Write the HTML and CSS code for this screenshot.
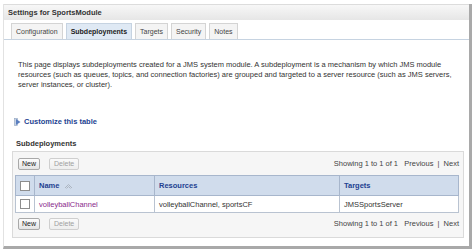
FILE: index.html
```html
<!DOCTYPE html>
<html lang="en">
<head>
  <meta charset="UTF-8" />
  <title>Settings for SportsModule</title>
  <link rel="stylesheet" href="styles.css">
</head>
<body>
  <div class="panel">
    <div class="title">Settings for SportsModule</div>

    <!-- Tabs -->
    <div class="tabs">
      <span class="tab">Configuration</span>
      <span class="tab active">Subdeployments</span>
      <span class="tab">Targets</span>
      <span class="tab">Security</span>
      <span class="tab">Notes</span>
    </div>

    <div class="content">
      <p class="intro">This page displays subdeployments created for a JMS system module. A subdeployment is a mechanism by which JMS module resources (such as queues, topics, and connection factories) are grouped and targeted to a server resource (such as JMS servers, server instances, or cluster).</p>

      <a class="customize" href="#">
        <svg width="7" height="8" viewBox="0 0 7 8"><rect x="0.5" y="0.5" width="3" height="7" fill="#c8d3e3" stroke="#8fa3c0" stroke-width="0.6"/><path d="M2 1 L6.5 4 L2 7 Z" fill="#5b7fc0"/></svg>
        Customize this table
      </a>

      <h4 class="section">Subdeployments</h4>

      <div class="table-box">
        <div class="toolbar">
          <div class="buttons">
            <button class="btn">New</button>
            <button class="btn disabled">Delete</button>
          </div>
          <div class="pager">Showing 1 to 1 of 1 &nbsp; Previous <span class="sep">|</span> Next</div>
        </div>

        <table class="grid">
          <thead>
            <tr>
              <th class="check"><span class="box"></span></th>
              <th class="name">Name
                <svg width="9" height="6" viewBox="0 0 9 6"><path d="M1 5 L4.5 1.5 L8 5" fill="none" stroke="#a8b0bc" stroke-width="0.9"/><path d="M2.5 5.5 L4.5 3.5 L6.5 5.5" fill="none" stroke="#a8b0bc" stroke-width="0.9"/></svg>
              </th>
              <th class="res">Resources</th>
              <th>Targets</th>
            </tr>
          </thead>
          <tbody>
            <tr>
              <td class="check"><span class="box"></span></td>
              <td><a class="link" href="#">volleyballChannel</a></td>
              <td>volleyballChannel, sportsCF</td>
              <td>JMSSportsServer</td>
            </tr>
          </tbody>
        </table>

        <div class="toolbar bottom">
          <div class="buttons">
            <button class="btn">New</button>
            <button class="btn disabled">Delete</button>
          </div>
          <div class="pager">Showing 1 to 1 of 1 &nbsp; Previous <span class="sep">|</span> Next</div>
        </div>
      </div>
    </div>
  </div>
</body>
</html>
```

FILE: styles.css
```css
body { margin: 0; background: #fff; font-family: 'Liberation Sans', Arial, sans-serif; font-size: 7.5px; color: #333; }

.panel {
  margin: 4px 2px 0 3px;
  height: 242px;
  border-left: 1px solid #e2e2e2;
  border-right: 3px solid #a9a9a9;
  border-bottom: 3px solid #a9a9a9;
  background: #fff;
}

.title {
  height: 15px;
  line-height: 16px;
  padding-left: 4px;
  font-weight: bold;
  color: #333;
  background: linear-gradient(#f7f7f7, #e6e6e6);
  border-top: 1px solid #dcdcdc;
}

.tabs {
  display: flex;
  gap: 3px;
  padding: 3px 0 0 7px;
  border-bottom: 1px solid #c6d3e1;
}

.tab {
  height: 15px;
  line-height: 15px;
  padding: 0 4px;
  font-size: 7px;
  border: 1px solid #d4d4d4;
  border-bottom: none;
  background: #f4f4f4;
  color: #444;
}

.tab.active {
  background: #dfe9f4;
  border-color: #c6d3e1;
  font-weight: bold;
  color: #222;
}

.content {
  padding: 0 5px 0 8px;
}

.intro {
  margin: 20px 0 0;
  padding: 0 6px;
  line-height: 10px;
  color: #333;
}

.customize {
  display: flex;
  align-items: center;
  gap: 3px;
  margin-top: 27px;
  padding-left: 2px;
  font-weight: bold;
  color: #233f91;
  text-decoration: none;
}

.section {
  margin: 13px 0 0 4px;
  font-size: 7.5px;
  font-weight: bold;
  color: #333;
}

.table-box {
  margin-top: 3px;
  height: 85px;
  padding: 0 4px 0 2px;
  border: 1px solid #dadada;
  background: #f6f6f6;
}

.toolbar {
  display: flex;
  justify-content: space-between;
  align-items: center;
  height: 23px;
}

.toolbar.bottom {
  height: 21px;
}

.buttons {
  display: flex;
  gap: 9px;
  padding-left: 3px;
}

.btn {
  height: 12px;
  padding: 0 3px;
  font-family: inherit;
  font-size: 7px;
  line-height: 10px;
  color: #222;
  background: linear-gradient(#fdfdfd, #e4e4e4);
  border: 1px solid #a9a9a9;
  border-radius: 2px;
}

.btn.disabled {
  padding: 0 4px;
  color: #a0a0a0;
  border-color: #cfcfcf;
  background: linear-gradient(#fafafa, #eeeeee);
}

.pager {
  color: #444;
}

.sep {
  margin: 0 2px;
}

.grid {
  width: 100%;
  border-collapse: collapse;
  background: #fff;
}

.grid th {
  height: 19px;
  padding: 0 4px;
  text-align: left;
  font-weight: bold;
  color: #233f91;
  background: #d0dcec;
  border: 1px solid #a7b6cc;
}

.grid td {
  height: 16px;
  padding: 0 4px;
  color: #333;
  border: 1px solid #b9c3d1;
}

.grid .check {
  width: 8px;
}

.grid .name {
  width: 111px;
}

.grid .res {
  width: 176px;
}

.grid svg {
  vertical-align: middle;
  margin-left: 2px;
}

.box {
  display: block;
  width: 8px;
  height: 8px;
  background: #fff;
  border: 1px solid #8d8d8d;
}

.link {
  color: #8a2a8c;
  text-decoration: none;
}
```
